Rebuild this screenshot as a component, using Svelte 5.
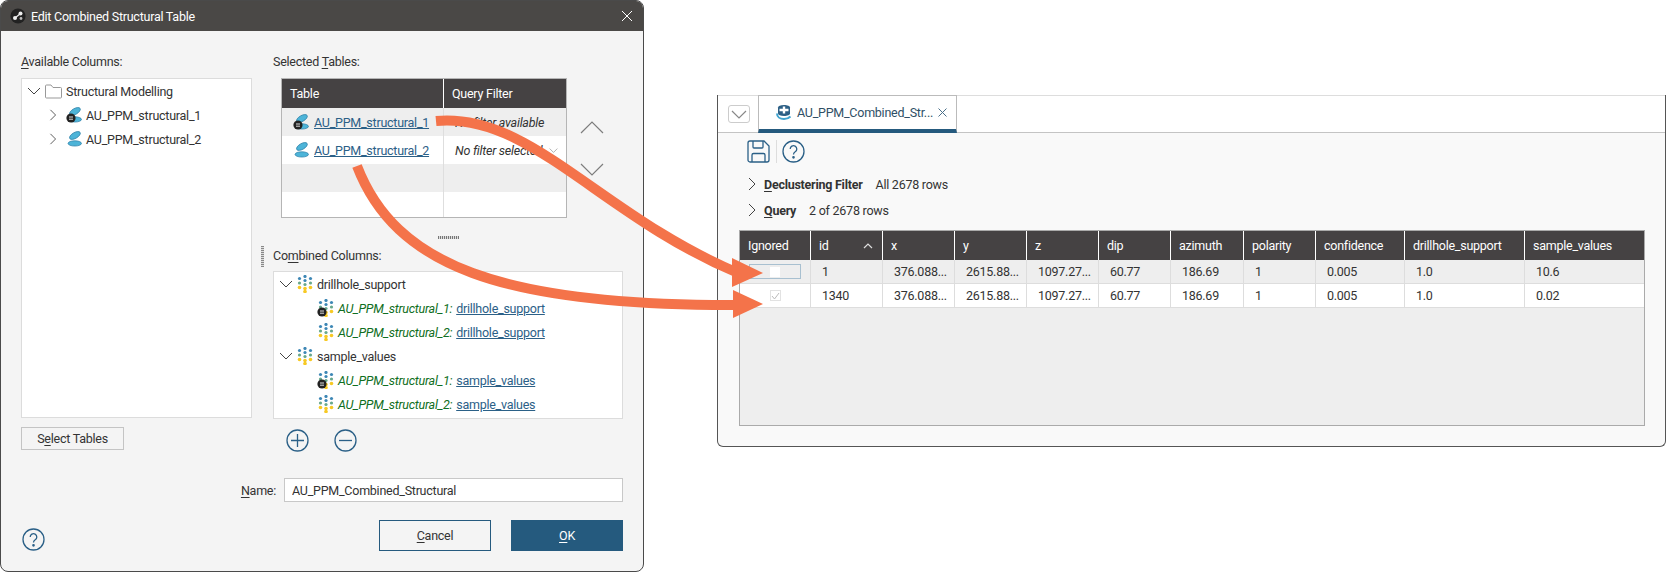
<script>
  const selected = [
    { name: 'AU_PPM_structural_1', badge: true, filter: 'No filter available', arrow: false },
    { name: 'AU_PPM_structural_2', badge: false, filter: 'No filter selected', arrow: true }
  ];

  const combined = [
    { name: 'drillhole_support' },
    { name: 'sample_values' }
  ];

  const columns = [
    { label: 'Ignored', width: 71 },
    { label: 'id', width: 72, sort: true },
    { label: 'x', width: 72 },
    { label: 'y', width: 72 },
    { label: 'z', width: 72 },
    { label: 'dip', width: 72 },
    { label: 'azimuth', width: 73 },
    { label: 'polarity', width: 72 },
    { label: 'confidence', width: 89 },
    { label: 'drillhole_support', width: 120 },
    { label: 'sample_values', width: 120 }
  ];

  const rows = [
    ['1', '376.088...', '2615.88...', '1097.27...', '60.77', '186.69', '1', '0.005', '1.0', '10.6'],
    ['1340', '376.088...', '2615.88...', '1097.27...', '60.77', '186.69', '1', '0.005', '1.0', '0.02']
  ];

  const gridTemplate = columns.map((c) => c.width + 'px').join(' ');
</script>

{#snippet chevronDown(size = 14)}
  <svg class="chev" width={size} height={size} viewBox="0 0 14 14"><path d="M1 4l6 6 6-6" /></svg>
{/snippet}

{#snippet chevronRight()}
  <svg class="chev" width="14" height="14" viewBox="0 0 14 14"><path d="M4 1l6 6-6 6" /></svg>
{/snippet}

{#snippet badge()}
  <svg class="badge" width="10" height="10" viewBox="0 0 10 10">
    <circle cx="5" cy="5" r="4.600" fill="#222" />
    <path d="M3 4h4M3 6.200h4" stroke="#ddd" stroke-width="1" />
  </svg>
{/snippet}

{#snippet tableIcon(hasBadge)}
  <span class="icon">
    <svg width="15" height="16" viewBox="0 0 17 18">
      <ellipse cx="9" cy="5" rx="6.800" ry="3.300" transform="rotate(-30 9 5)" fill="#4db4d8" stroke="#2a7ea6" stroke-width=".8" />
      <ellipse cx="8.800" cy="14" rx="7.600" ry="3" fill="#4db4d8" stroke="#2a7ea6" stroke-width=".8" />
    </svg>
    {#if hasBadge}{@render badge()}{/if}
  </span>
{/snippet}

{#snippet columnIcon(hasBadge)}
  <span class="icon">
    <svg width="16" height="18" viewBox="0 0 16 18">
      {#each [[2.5, 3.5], [8, 1.5], [13.5, 3.5], [8, 5.5]] as [cx, cy]}
        <circle {cx} {cy} r="1.600" fill="#3d87b5" />
      {/each}
      {#each [[2.5, 8], [8, 9.5], [13.5, 8]] as [cx, cy]}
        <circle {cx} {cy} r="1.600" fill="#68a88c" />
      {/each}
      {#each [[2.5, 12.5], [8, 13.5], [13.5, 12.5], [8, 16.5]] as [cx, cy]}
        <circle {cx} {cy} r="1.800" fill="#f7c924" />
      {/each}
    </svg>
    {#if hasBadge}{@render badge()}{/if}
  </span>
{/snippet}

{#snippet helpIcon()}
  <svg width="23" height="23" viewBox="0 0 23 23" class="round">
    <circle cx="11.500" cy="11.500" r="10.500" />
    <path d="M8.200 9a3.300 3.300 0 1 1 5 2.800c-1.100.7-1.700 1.300-1.700 2.600" />
    <circle cx="11.500" cy="17.300" r=".7" />
  </svg>
{/snippet}

<div class="page">
  <section class="dialog">
    <header class="titlebar">
      <span class="app-logo">
        <svg width="16" height="16" viewBox="0 0 16 16">
          <circle cx="8" cy="8" r="7.600" fill="#222" />
          <circle cx="5" cy="10" r="2" fill="#eee" />
          <circle cx="10.500" cy="5.500" r="2" fill="#eee" />
          <circle cx="11" cy="10.500" r="1.400" fill="#bbb" />
          <path d="M5 10l5.500-4.500" stroke="#eee" stroke-width="1.200" />
        </svg>
      </span>
      <span class="title">Edit Combined Structural Table</span>
      <svg class="close" width="12" height="12" viewBox="0 0 12 12"><path d="M1 1l10 10M11 1L1 11" /></svg>
    </header>

    <div class="dialog-body">
      <div class="left-col">
        <div class="label"><u>A</u>vailable Columns:</div>
        <div class="tree available">
          <div class="tree-row">
            {@render chevronDown()}
            <svg width="17" height="15" viewBox="0 0 17 15" class="folder"><path d="M.5 13V2a1 1 0 0 1 1-1h4.500l2 2.500h7.500a1 1 0 0 1 1 1V13a1 1 0 0 1-1 1h-14a1 1 0 0 1-1-1z" /></svg>
            <span>Structural Modelling</span>
          </div>
          {#each selected as table}
            <div class="tree-row nested">
              {@render chevronRight()}
              {@render tableIcon(table.badge)}
              <span>{table.name}</span>
            </div>
          {/each}
        </div>
        <button class="btn select-tables" type="button">S<u>e</u>lect Tables</button>
      </div>

      <div class="right-col">
        <div class="label">Selected <u>T</u>ables:</div>
        <div class="tables-row">
          <div class="selected-table">
            <div class="st-row st-head">
              <div>Table</div>
              <div>Query Filter</div>
            </div>
            {#each selected as table, i}
              <div class="st-row" class:odd={i % 2 === 0}>
                <div class="st-name">
                  {@render tableIcon(table.badge)}
                  <a href="#top">{table.name}</a>
                </div>
                <div class="st-filter">
                  <em>{table.filter}</em>
                  {#if table.arrow}{@render chevronDown(9)}{/if}
                </div>
              </div>
            {/each}
            <div class="st-row odd"><div></div><div></div></div>
            <div class="st-row last"><div></div><div></div></div>
          </div>
          <div class="move-buttons">
            <svg width="24" height="14" viewBox="0 0 24 14"><path d="M1 13L12 2l11 11" /></svg>
            <svg width="24" height="14" viewBox="0 0 24 14"><path d="M1 1l11 11L23 1" /></svg>
          </div>
        </div>
        <div class="splitter"></div>
        <div class="label combined-label"><span class="grip"></span>Co<u>m</u>bined Columns:</div>
        <div class="tree combined">
          {#each combined as col}
            <div class="tree-row">
              {@render chevronDown()}
              {@render columnIcon(false)}
              <span>{col.name}</span>
            </div>
            {#each selected as table}
              <div class="tree-row source">
                {@render columnIcon(table.badge)}
                <em>{table.name}:</em>
                <a href="#top">{col.name}</a>
              </div>
            {/each}
          {/each}
        </div>
        <div class="add-remove">
          <svg width="23" height="23" viewBox="0 0 23 23" class="round"><circle cx="11.500" cy="11.500" r="10.500" /><path d="M11.500 5v13M5 11.500h13" /></svg>
          <svg width="23" height="23" viewBox="0 0 23 23" class="round"><circle cx="11.500" cy="11.500" r="10.500" /><path d="M5 11.500h13" /></svg>
        </div>
      </div>

      <div class="name-row">
        <label for="combined-name"><u>N</u>ame:</label>
        <input id="combined-name" value="AU_PPM_Combined_Structural" />
      </div>

      <div class="footer">
        {@render helpIcon()}
        <div class="footer-buttons">
          <button class="btn outline" type="button"><u>C</u>ancel</button>
          <button class="btn primary" type="button"><u>O</u>K</button>
        </div>
      </div>
    </div>
  </section>

  <section class="window">
    <div class="tabbar">
      <div class="collapse">
        <svg width="16" height="9" viewBox="0 0 16 9"><path d="M1 1l7 7 7-7" /></svg>
      </div>
      <div class="tab">
        <svg width="16" height="17" viewBox="0 0 16 17">
          <path d="M2 3.500C2 2 4.500 1 8 1s6 1 6 2.500v6c0 1.500-2.500 2.500-6 2.500s-6-1-6-2.500z" fill="#2c5f85" />
          <path d="M6.800 2.500h2.400v2.300h3.300v2.400H9.200v2.300H6.800V7.200H3.500V4.800h3.300z" fill="#fff" />
          <path d="M1 9.500c0 3.500 3 5.500 7 5.500 2.500 0 4.800-.8 6.500-2.500" fill="none" stroke="#3fa3cf" stroke-width="2" />
        </svg>
        <span class="tab-title">AU_PPM_Combined_Str...</span>
        <svg class="tab-close" width="9" height="9" viewBox="0 0 9 9"><path d="M.5.500l8 8M8.500.500l-8 8" /></svg>
      </div>
    </div>

    <div class="window-body">
      <div class="toolbar">
        <svg width="23" height="23" viewBox="0 0 23 23" class="round">
          <path d="M1 3a2 2 0 0 1 2-2h14l5 5v14a2 2 0 0 1-2 2H3a2 2 0 0 1-2-2z" />
          <path d="M6 1v6a1 1 0 0 0 1 1h8a1 1 0 0 0 1-1V1M5 22v-7a1.500 1.500 0 0 1 1.500-1.500h10A1.500 1.500 0 0 1 18 15v7" />
        </svg>
        <span class="tool-sep"></span>
        {@render helpIcon()}
      </div>

      <div class="section-row first">
        {@render chevronRight()}
        <strong><u>D</u>eclustering Filter</strong>
        <span>All 2678 rows</span>
      </div>
      <div class="section-row">
        {@render chevronRight()}
        <strong><u>Q</u>uery</strong>
        <span>2 of 2678 rows</span>
      </div>

      <div class="data-table">
        <div class="dt-row dt-head" style="grid-template-columns: {gridTemplate}">
          {#each columns as col}
            <div class="dt-cell">
              {col.label}
              {#if col.sort}
                <svg width="10" height="6" viewBox="0 0 10 6"><path d="M1 5l4-4 4 4" /></svg>
              {/if}
            </div>
          {/each}
        </div>
        {#each rows as row, r}
          <div class="dt-row" class:odd={r === 0} style="grid-template-columns: {gridTemplate}">
            <div class="dt-cell ignored">
              {#if r === 0}
                <span class="focus-box"><span class="check-empty"></span></span>
              {:else}
                <span class="check-on">
                  <svg width="9" height="8" viewBox="0 0 9 8"><path d="M1 4l2.500 3L8 1" /></svg>
                </span>
              {/if}
            </div>
            {#each row as value}
              <div class="dt-cell">{value}</div>
            {/each}
          </div>
        {/each}
      </div>
    </div>
  </section>

  <svg class="arrows" width="1666" height="572" viewBox="0 0 1666 572">
    <path d="M436 121C530 112 600 215 738 273" />
    <polygon points="732,258 763,273 732,287" />
    <path d="M357 166C395 265 500 306 738 305" />
    <polygon points="733,290 763,304 733,318" />
  </svg>
</div>

<style>
  :global(body) {
    background: #fff;
  }

  .page {
    position: relative;
    width: 1666px;
    height: 572px;
    overflow: hidden;
    font-family: Roboto, "Liberation Sans", sans-serif;
    font-size: 12.5px;
    letter-spacing: -0.25px;
    color: #333;
  }

  a { color: #2b6087; text-decoration: underline; }
  u { text-underline-offset: 2px; }
  svg { flex: none; display: block; }

  .chev { fill: none; stroke: #444; stroke-width: 1; }
  .round { fill: none; stroke: #2b6087; stroke-width: 1.3; }

  .dialog {
    position: absolute;
    left: 0;
    top: 0;
    width: 644px;
    height: 572px;
    box-sizing: border-box;
    border: 1px solid #4a4a4a;
    border-radius: 8px;
    background: #f4f4f4;
    overflow: hidden;
  }

  .titlebar {
    height: 30px;
    background: #4a4846;
    display: flex;
    align-items: center;
    padding: 0 9px;
    gap: 5px;
    color: #fff;
  }
  .title { flex: 1; }
  .close { fill: none; stroke: #fff; stroke-width: 1; margin-right: 1px; }

  .dialog-body {
    display: grid;
    grid-template-columns: 231px 350px;
    column-gap: 21px;
    padding: 23px 0 0 20px;
  }

  .label { line-height: 16px; height: 16px; margin-bottom: 8px; }

  .tree {
    background: #fff;
    border: 1px solid #dcdcdc;
    box-sizing: border-box;
  }
  .available { height: 340px; }
  .tree-row {
    display: flex;
    align-items: center;
    height: 24px;
    padding-left: 5px;
    gap: 4px;
    white-space: nowrap;
  }
  .tree-row.nested { padding-left: 25px; gap: 4px; }
  .tree-row.nested .chev { width: 12px; margin-right: 4px; }
  .folder { fill: #fff; stroke: #999; stroke-width: 1; }

  .icon { position: relative; display: inline-block; flex: none; }
  .badge { position: absolute; left: -1px; bottom: 0; }

  .btn {
    font: inherit;
    letter-spacing: inherit;
    color: #333;
    background: #f4f4f4;
    box-sizing: border-box;
    padding: 0;
  }
  .select-tables {
    width: 103px;
    height: 23px;
    margin-top: 9px;
    border: 1px solid #c4c4c4;
    display: block;
  }

  .tables-row { display: flex; padding-left: 8px; }
  .selected-table {
    width: 286px;
    height: 140px;
    box-sizing: border-box;
    border: 1px solid #b5b5b5;
    background: #fff;
  }
  .st-row {
    display: grid;
    grid-template-columns: 161px 1fr;
    height: 28px;
  }
  .st-row > div + div { border-left: 1px solid #dedede; }
  .st-row.odd { background: #eee; }
  .st-row.last { height: 25px; }
  .st-head {
    height: 29px;
    background: #454243;
    color: #fff;
    align-items: stretch;
  }
  .st-head > div { display: flex; align-items: center; padding-left: 8px; }
  .st-head > div + div { border-left: 1px solid #fff; }
  .st-name { display: flex; align-items: center; gap: 5px; padding-left: 12px; }
  .st-filter { display: flex; align-items: center; gap: 7px; padding-left: 11px; }
  .st-filter em { white-space: nowrap; }
  .st-filter .chev { stroke: #888; }

  .move-buttons {
    display: flex;
    flex-direction: column;
    gap: 29px;
    margin: 42px 0 0 13px;
  }
  .move-buttons path { fill: none; stroke: #7d7d7d; stroke-width: 1.2; }

  .splitter {
    width: 21px;
    height: 3px;
    margin: 18px 0 9px 165px;
    background: repeating-linear-gradient(90deg, #777 0 1px, #ddd 1px 2px);
  }

  .combined-label { display: flex; align-items: center; margin-bottom: 7px; white-space: pre; }
  .grip {
    width: 3px;
    height: 21px;
    margin: 0 9px 0 -12px;
    background: repeating-linear-gradient(0deg, #888 0 1px, #ddd 1px 2px);
  }

  .combined { height: 148px; }
  .combined .tree-row { height: 24px; gap: 4px; }
  .combined .tree-row.source { padding-left: 44px; gap: 4px; }
  .source em { color: #0f6e22; }

  .add-remove {
    display: flex;
    gap: 25px;
    margin: 10px 0 0 13px;
  }

  .name-row {
    grid-column: 1 / -1;
    display: flex;
    justify-content: flex-end;
    align-items: center;
    gap: 8px;
    margin-top: 26px;
  }
  .name-row input {
    width: 339px;
    height: 24px;
    box-sizing: border-box;
    border: 1px solid #c8c8c8;
    background: #fff;
    font: inherit;
    letter-spacing: inherit;
    color: #333;
    padding: 0 7px;
    outline: none;
  }

  .footer {
    grid-column: 1 / -1;
    display: flex;
    justify-content: space-between;
    align-items: flex-end;
    margin-top: 18px;
    padding-left: 1px;
  }
  .footer-buttons { display: flex; gap: 20px; }
  .outline, .primary {
    width: 112px;
    height: 31px;
    border: 1px solid #255a7e;
  }
  .primary { background: #255a7e; color: #fff; }

  .window {
    position: absolute;
    left: 717px;
    top: 95px;
    width: 949px;
    height: 352px;
    box-sizing: border-box;
    border: 1px solid #555;
    border-top: 0;
    border-radius: 0 0 6px 6px;
    background: #f9f9f9;
    overflow: hidden;
  }

  .tabbar {
    display: flex;
    height: 38px;
    box-sizing: border-box;
    background: #fff;
    border-top: 1px solid #ddd;
    border-bottom: 1px solid #c4c4c4;
    padding-left: 10px;
  }
  .collapse {
    width: 22px;
    height: 18px;
    margin-top: 9px;
    box-sizing: border-box;
    border: 1px solid #ccc;
    border-radius: 3px;
    display: flex;
    align-items: center;
    justify-content: center;
  }
  .collapse path { fill: none; stroke: #888; stroke-width: 1.2; }
  .tab {
    margin-left: 8px;
    width: 199px;
    height: 38px;
    margin-top: -1px;
    box-sizing: border-box;
    border: 1px solid #bbb;
    border-bottom: 4px solid #255a7e;
    display: flex;
    align-items: center;
    padding: 0 9px 0 17px;
    color: #2f4f66;
    gap: 5px;
  }
  .tab-title { white-space: nowrap; }
  .tab-close { fill: none; stroke: #4a6f88; stroke-width: 1; margin-left: auto; }

  .toolbar {
    display: flex;
    align-items: center;
    height: 23px;
    padding: 7px 0 0 29px;
  }
  .tool-sep { width: 1px; height: 23px; background: #ddd; margin: 0 5px 0 6px; }

  .section-row {
    display: flex;
    align-items: center;
    height: 20px;
    padding-left: 27px;
    margin-top: 6px;
    gap: 5px;
  }
  .section-row.first { margin-top: 11px; }
  .section-row span { margin-left: 8px; }

  .data-table {
    margin: 10px 0 0 21px;
    width: 906px;
    height: 196px;
    box-sizing: border-box;
    border: 1px solid #aaa;
    background: #eee;
  }
  .dt-row { display: grid; height: 24px; background: #fff; border-bottom: 1px solid #ddd; box-sizing: border-box; }
  .dt-row.odd { background: #eee; }
  .dt-head {
    height: 29px;
    background: #454243;
    color: #fff;
    border-bottom: 0;
  }
  .dt-cell {
    display: flex;
    align-items: center;
    padding-left: 11px;
    border-right: 1px solid #ddd;
    white-space: nowrap;
    overflow: hidden;
  }
  .dt-cell:last-child { border-right: 0; }
  .dt-head .dt-cell {
    padding-left: 8px;
    border-right: 1px solid #fff;
  }
  .dt-head .dt-cell:last-child { border-right: 0; }
  .dt-head svg { margin-left: auto; margin-right: 9px; fill: none; stroke: #ddd; stroke-width: 1.2; }
  .ignored { padding-left: 0; justify-content: center; }
  .focus-box {
    width: 52px;
    height: 15px;
    box-sizing: border-box;
    border: 1px solid #a8c0d0;
    display: flex;
    align-items: center;
    justify-content: center;
  }
  .check-empty { width: 10px; height: 10px; background: #fff; }
  .check-on {
    width: 11px;
    height: 11px;
    box-sizing: border-box;
    border: 1px solid #e2e2e2;
    display: flex;
    align-items: center;
    justify-content: center;
  }
  .check-on path { fill: none; stroke: #bbb; stroke-width: 1; }

  .arrows {
    position: absolute;
    left: 0;
    top: 0;
    pointer-events: none;
  }
  .arrows path { fill: none; stroke: #f4734a; stroke-width: 10; }
  .arrows polygon { fill: #f4734a; }
</style>
